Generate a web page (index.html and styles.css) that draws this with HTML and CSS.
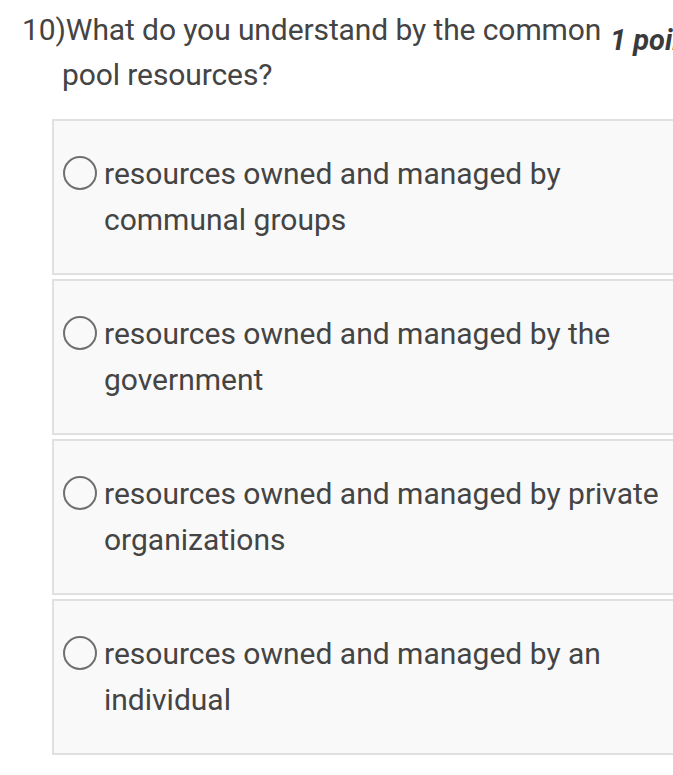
FILE: index.html
```html
<!DOCTYPE html>
<html lang="en">
<head>
    <meta charset="UTF-8">
    <meta name="viewport" content="width=device-width, initial-scale=1.0">
    <title>Question 10</title>
    <link rel="stylesheet" href="styles.css">
</head>
<body>
    <div class="question">
        <div class="question-head">
            <div class="question-title">10)What do you understand by the common pool resources?</div>
            <div class="points">1 point</div>
        </div>

        <div class="options">
            <label class="option">
                <span class="radio"></span>
                <span class="option-text">resources owned and managed by communal groups</span>
            </label>
            <label class="option">
                <span class="radio"></span>
                <span class="option-text">resources owned and managed by the government</span>
            </label>
            <label class="option">
                <span class="radio"></span>
                <span class="option-text">resources owned and managed by private organizations</span>
            </label>
            <label class="option">
                <span class="radio"></span>
                <span class="option-text">resources owned and managed by an individual</span>
            </label>
        </div>
    </div>
</body>
</html>
```

FILE: styles.css
```css
:root { --text: #444444; --border: #e0e0e0; --card: #f9f9f9; --radio: #707070; }
html, body { overflow: hidden; }
body { font-family: Roboto, "Noto Sans", sans-serif; background: #ffffff; color: var(--text); margin: 0; padding: 7px 0 0 22px; width: 900px; }
.question-head { display: flex; align-items: flex-start; }
.question-title { flex: none; width: 585px; padding-left: 40px; text-indent: -40px; box-sizing: border-box; font-size: 30px; line-height: 45px; letter-spacing: -0.1px; }
.points { margin-left: 3px; margin-top: 11px; font-size: 29px; line-height: 45px; font-weight: 700; font-style: italic; color: #3a3a3a; white-space: nowrap; }
.options { display: flex; flex-direction: column; gap: 4px; margin: 22px 0 0 30px; }
.option { display: flex; align-items: flex-start; width: 700px; height: 156px; box-sizing: border-box; background: var(--card); border: 2px solid var(--border); padding: 30px 0 0 9px; }
.radio { flex: none; width: 34px; height: 34px; border: 2.5px solid var(--radio); border-radius: 50%; margin: 5px 7px 0 0; box-sizing: border-box; }
.option-text { width: 570px; font-size: 30px; line-height: 46px; }
```
